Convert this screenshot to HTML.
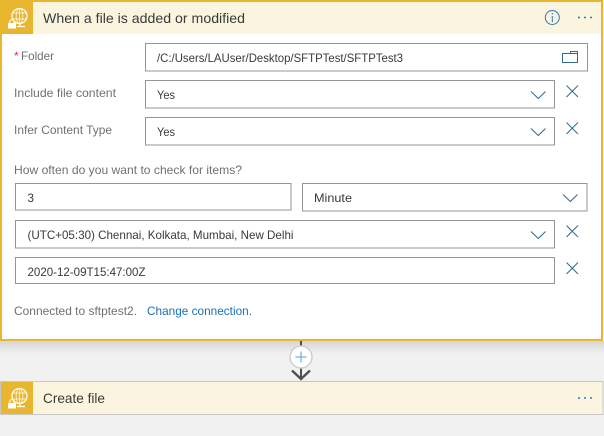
<!DOCTYPE html>
<html><head><meta charset="utf-8"><style>
html,body{margin:0;padding:0;width:604px;height:436px;overflow:hidden;background:#f1f1f1}
svg{display:block}
text{font-family:"Liberation Sans",sans-serif;font-size:12px;fill:#3a3a3a}
.l{fill:#707070}
.b{fill:none;stroke:#949494;stroke-width:1}
.i{fill:none;stroke:#2f6a8f;stroke-width:1}
</style></head><body>
<svg width="604" height="436" viewBox="0 0 604 436" xmlns="http://www.w3.org/2000/svg">
<defs>
<linearGradient id="s" x1="0" y1="0" x2="0" y2="1"><stop offset="0" stop-color="#d6d6d6"/><stop offset="1" stop-color="#f1f1f1"/></linearGradient>
<g id="web" fill="none" stroke="#fff">
<circle cx="19.500" cy="16" r="7.500" stroke-width="1.200"/>
<ellipse cx="19.500" cy="16" rx="3.400" ry="7.500" stroke-width=".7"/>
<path d="M12.500 13H26.500M12.500 19H26.500M19.500 8.500V23.500" stroke-width=".7"/>
<path d="M20 24V26.500M17 26.500H25" stroke-width="1.200"/>
<path d="M9.700 23V21.800a2.200 2.200 0 0 1 4.400 0V23" stroke-width="1.100"/>
<rect x="8" y="23" width="8" height="5.500" fill="#fff" stroke="none"/>
</g>
</defs>

<rect x="0" y="341" width="604" height="13" fill="url(#s)"/>

<rect x="1" y="1" width="601" height="339" fill="#fff" stroke="#e8b62f" stroke-width="2"/>
<rect x="33" y="2" width="568" height="32" fill="#fbf4de"/>
<rect x="0" y="0" width="33" height="34" fill="#e8b62f"/>
<use href="#web" x="0" y="0"/>

<text x="43" y="23" style="font-size:14px" textLength="202" lengthAdjust="spacingAndGlyphs">When a file is added or modified</text>

<circle cx="552.300" cy="17.500" r="7" fill="none" stroke="#2b79bd" stroke-width="1"/>
<path d="M552.300 16V22M552.300 13V14.500" stroke="#2b79bd" stroke-width="1"/>
<path d="M578 17.500h2M584 17.500h2M590 17.500h2" stroke="#2b79bd" stroke-width="1.500"/>

<text x="14" y="60" style="font-size:12px;fill:#e0304a">*</text>
<text x="21" y="60" class="l" textLength="33" lengthAdjust="spacingAndGlyphs">Folder</text>
<rect class="b" x="145.500" y="43.500" width="442" height="27.500"/>
<text x="157" y="62" textLength="246" lengthAdjust="spacingAndGlyphs">/C:/Users/LAUser/Desktop/SFTPTest/SFTPTest3</text>
<path class="i" d="M562.500 53.500H577.500V62.500H562.500ZM570.500 53.500V51.500H577.500V53.500" stroke-width="1.100"/>

<text x="14" y="97" class="l" textLength="102" lengthAdjust="spacingAndGlyphs">Include file content</text>
<rect class="b" x="145.500" y="80.500" width="409" height="27.500"/>
<text x="157" y="99" textLength="18" lengthAdjust="spacingAndGlyphs">Yes</text>
<path class="i" d="M531 91.500L538.300 98.500L545.500 91.500" stroke-width="1.200"/>
<path class="i" d="M566.500 85.500L578 97M578 85.500L566.500 97"/>

<text x="14" y="134" class="l" textLength="98" lengthAdjust="spacingAndGlyphs">Infer Content Type</text>
<rect class="b" x="145.500" y="117.500" width="409" height="27.500"/>
<text x="157" y="136" textLength="18" lengthAdjust="spacingAndGlyphs">Yes</text>
<path class="i" d="M531 128.500L538.300 135.500L545.500 128.500" stroke-width="1.200"/>
<path class="i" d="M566.500 122.500L578 134M578 122.500L566.500 134"/>

<text x="14" y="174" class="l" textLength="228" lengthAdjust="spacingAndGlyphs">How often do you want to check for items?</text>
<rect class="b" x="15.500" y="183.500" width="275.500" height="26.500"/>
<text x="27.500" y="202" textLength="6.500" lengthAdjust="spacingAndGlyphs">3</text>
<rect class="b" x="302.500" y="183.500" width="284.500" height="27.500"/>
<text x="314" y="202" textLength="38" lengthAdjust="spacingAndGlyphs">Minute</text>
<path class="i" d="M563 194.500L570.300 201.500L577.500 194.500" stroke-width="1.200"/>

<rect class="b" x="15.500" y="220.500" width="539" height="27.500"/>
<text x="27.500" y="239" textLength="266" lengthAdjust="spacingAndGlyphs">(UTC+05:30) Chennai, Kolkata, Mumbai, New Delhi</text>
<path class="i" d="M531 231.500L538.300 238.500L545.500 231.500" stroke-width="1.200"/>
<path class="i" d="M566.500 225.500L578 237M578 225.500L566.500 237"/>

<rect class="b" x="15.500" y="257.500" width="539" height="26"/>
<text x="27.500" y="276" textLength="118" lengthAdjust="spacingAndGlyphs">2020-12-09T15:47:00Z</text>
<path class="i" d="M566.500 262.500L578 274M578 262.500L566.500 274"/>

<text x="14" y="315" class="l" textLength="123" lengthAdjust="spacingAndGlyphs">Connected to sftptest2.</text>
<text x="147" y="315" style="fill:#1a6fb5" textLength="105" lengthAdjust="spacingAndGlyphs">Change connection.</text>

<path d="M301 341V346M301 368V380" stroke="#505050" stroke-width="2"/>
<path d="M292 370.500L301 379L310 370.500" fill="none" stroke="#505050" stroke-width="2.400"/>
<circle cx="301" cy="357" r="11" fill="#fff" stroke="#cfcfcf" stroke-width="1.500"/>
<path d="M301 351.500V362.500M295.500 357H306.500" stroke="#6cb4e8" stroke-width="1.300"/>

<rect x="0.500" y="381.500" width="602.500" height="33" fill="#fbf4de" stroke="#c8c8c8"/>
<rect x="1" y="382" width="32" height="32" fill="#e8b62f"/>
<use href="#web" x="0" y="380"/>
<text x="43" y="403" style="font-size:14px" textLength="62" lengthAdjust="spacingAndGlyphs">Create file</text>
<path d="M578 398h2M584 398h2M590 398h2" stroke="#2b79bd" stroke-width="1.500"/>
</svg>
</body></html>
